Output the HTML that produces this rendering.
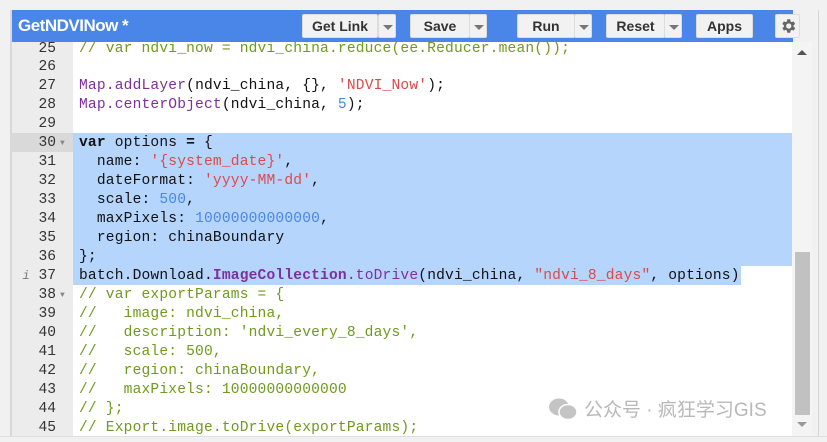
<!DOCTYPE html>
<html><head><meta charset="utf-8"><style>
*{margin:0;padding:0;box-sizing:border-box}
body{width:827px;height:442px;overflow:hidden;background:#f1f1f1;position:relative;font-family:"Liberation Sans",sans-serif}
.lb{position:absolute;left:10px;top:10px;width:2px;height:432px;background:#d8d8d8}
.hdr{position:absolute;left:12px;top:10px;width:781px;height:32px;background:#4a86e8;z-index:2}
.title{position:absolute;left:6px;top:6px;color:#fff;font-weight:bold;font-size:17px;letter-spacing:-0.5px}
.btn{position:absolute;top:4px;height:24px;background:#f2f2f2;border:1px solid #ddd;border-radius:2px;font-weight:bold;font-size:14px;color:#333;text-align:center;line-height:22px}
.dd{position:absolute;top:4px;height:24px;width:18px;background:#f2f2f2;border:1px solid #ddd;border-radius:2px}
.dd:after{content:"";position:absolute;left:4px;top:10px;border-left:5px solid transparent;border-right:5px solid transparent;border-top:5px solid #777}
.code{position:absolute;left:12px;top:42px;width:780px;height:394px;background:#fff;overflow:hidden}
.gut{position:absolute;left:0;top:0;width:61px;height:394px;background:#ececec}
.ln{position:absolute;left:0;width:780px;height:19px;font-family:"Liberation Mono",monospace;font-size:14.6px;line-height:19px;white-space:pre;padding-top:1px}
.num{position:absolute;left:0;width:44px;text-align:right;color:#333;font-weight:normal}
.ar{position:absolute;left:48px;color:#888;font-size:8px}
.txt{position:absolute;left:67px;color:#111;letter-spacing:0.17px}
.sel{position:absolute;left:61px;height:19px;background:#b5d5fc}
.c{color:#6f9a1e}.p{color:#7e2f9e}.s{color:#e04848}.n{color:#4b86e6}.k{font-weight:bold}.b{color:#7e2f9e;font-weight:bold}
.sb{position:absolute;left:792px;top:42px;width:20px;height:394px;background:#f4f4f4}
.thumb{position:absolute;left:3px;top:210px;width:15px;height:163px;background:#c1c1c1}
.rp{position:absolute;left:818px;top:10px;width:1px;height:432px;background:#d6d6d6}
.bot{position:absolute;left:0;top:436px;width:827px;height:6px;background:#f1f1f1;border-top:1px solid #ddd}
.wm{position:absolute;left:548px;top:395px;font-family:"Liberation Sans","Noto Sans CJK SC",sans-serif;font-size:19px;color:#b8b8b8;z-index:3}
</style></head><body>
<div class="lb"></div>
<div class="hdr"><div class="title">GetNDVINow *</div>
<div class="btn" style="left:290px;width:76px">Get Link</div><div class="dd" style="left:366px"></div>
<div class="btn" style="left:398px;width:60px">Save</div><div class="dd" style="left:457px"></div>
<div class="btn" style="left:505px;width:58px">Run</div><div class="dd" style="left:562px"></div>
<div class="btn" style="left:594px;width:59px">Reset</div><div class="dd" style="left:652px"></div>
<div class="btn" style="left:684px;width:57px">Apps</div>
<div class="btn" style="left:763px;width:25px;padding-top:2px"><svg width="18" height="18" viewBox="0 0 24 24"><path fill="#666" d="M19.4 13a7.5 7.5 0 0 0 0-2l2.1-1.6-2-3.5-2.5 1a7 7 0 0 0-1.7-1L15 3h-4l-.4 2.9a7 7 0 0 0-1.7 1l-2.5-1-2 3.5L6.6 11a7.5 7.5 0 0 0 0 2l-2.1 1.6 2 3.5 2.5-1a7 7 0 0 0 1.7 1L11 21h4l.4-2.9a7 7 0 0 0 1.7-1l2.5 1 2-3.5zM13 15.5a3.5 3.5 0 1 1 0-7 3.5 3.5 0 0 1 0 7z"/></svg></div>
</div>
<div class="code"><div class="gut"></div>
<div style="position:absolute;left:0;top:91px;width:61px;height:19px;background:#d9d9d9"></div>
<div class="sel" style="top:91px;width:719px;height:133px"></div>
<div class="sel" style="top:224px;width:668px"></div>
<div class="ln" style="top:-4px;padding-top:2px"><span class="num">25</span><span class="txt c">// var ndvi_now = ndvi_china.reduce(ee.Reducer.mean());</span></div>
<div class="ln" style="top:15px"><span class="num">26</span></div>
<div class="ln" style="top:34px"><span class="num">27</span><span class="txt"><span class="p">Map.addLayer</span>(ndvi_china, {}, <span class="s">'NDVI_Now'</span>);</span></div>
<div class="ln" style="top:53px"><span class="num">28</span><span class="txt"><span class="p">Map.centerObject</span>(ndvi_china, <span class="n">5</span>);</span></div>
<div class="ln" style="top:72px"><span class="num">29</span></div>
<div class="ln" style="top:91px"><span class="num">30</span><span class="ar">▼</span><span class="txt"><span class="k">var</span> options <span class="k">=</span> {</span></div>
<div class="ln" style="top:110px"><span class="num">31</span><span class="txt">  name: <span class="s">'{system_date}'</span>,</span></div>
<div class="ln" style="top:129px"><span class="num">32</span><span class="txt">  dateFormat: <span class="s">'yyyy-MM-dd'</span>,</span></div>
<div class="ln" style="top:148px"><span class="num">33</span><span class="txt">  scale: <span class="n">500</span>,</span></div>
<div class="ln" style="top:167px"><span class="num">34</span><span class="txt">  maxPixels: <span class="n">10000000000000</span>,</span></div>
<div class="ln" style="top:186px"><span class="num">35</span><span class="txt">  region: chinaBoundary</span></div>
<div class="ln" style="top:205px"><span class="num">36</span><span class="txt">};</span></div>
<div class="ln" style="top:224px"><span class="num"><span style="color:#777;font-style:italic;font-size:12px">i</span> 37</span><span class="txt">batch.Download.<span class="b">ImageCollection</span><span class="p">.toDrive</span>(ndvi_china, <span class="s">"ndvi_8_days"</span>, options)</span></div>
<div class="ln" style="top:243px"><span class="num">38</span><span class="ar">▼</span><span class="txt c">// var exportParams = {</span></div>
<div class="ln" style="top:262px"><span class="num">39</span><span class="txt c">//   image: ndvi_china,</span></div>
<div class="ln" style="top:281px"><span class="num">40</span><span class="txt c">//   description: 'ndvi_every_8_days',</span></div>
<div class="ln" style="top:300px"><span class="num">41</span><span class="txt c">//   scale: 500,</span></div>
<div class="ln" style="top:319px"><span class="num">42</span><span class="txt c">//   region: chinaBoundary,</span></div>
<div class="ln" style="top:338px"><span class="num">43</span><span class="txt c">//   maxPixels: 10000000000000</span></div>
<div class="ln" style="top:357px"><span class="num">44</span><span class="txt c">// };</span></div>
<div class="ln" style="top:376px"><span class="num">45</span><span class="txt c">// Export.image.toDrive(exportParams);</span></div>
</div>
<div class="sb"><div style="position:absolute;left:5px;top:8px;border-left:5px solid transparent;border-right:5px solid transparent;border-bottom:5px solid #555"></div><div class="thumb"></div><div style="position:absolute;left:5px;top:380px;border-left:5px solid transparent;border-right:5px solid transparent;border-top:5px solid #999"></div></div>
<div class="rp"></div>
<div class="bot"></div>
<div class="wm"><svg width="30" height="24" viewBox="0 0 30 24" style="vertical-align:-5px;margin-right:6px"><ellipse cx="11" cy="10" rx="10" ry="8.5" fill="#c4c4c4"/><ellipse cx="20" cy="15" rx="9" ry="7.5" fill="#c4c4c4" stroke="#fff" stroke-width="1.5"/></svg>公众号 · 疯狂学习GIS</div>
</body></html>
